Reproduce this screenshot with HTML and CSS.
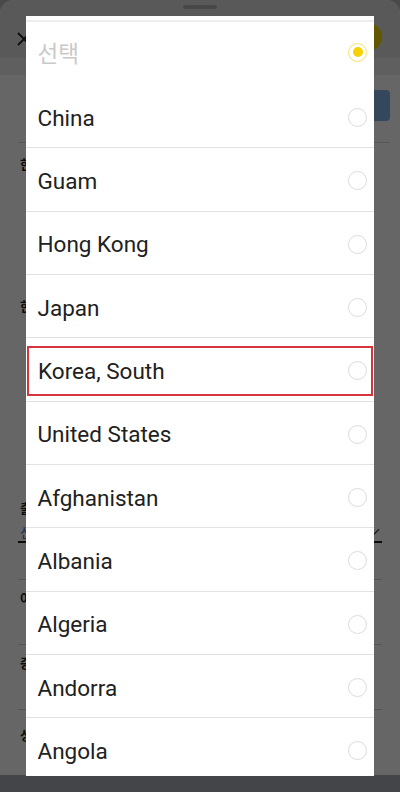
FILE: index.html
```html
<!DOCTYPE html>
<html lang="ko">
<head>
  <meta charset="UTF-8" />
  <meta name="viewport" content="width=device-width, initial-scale=1.0" />
  <title>국가 선택</title>
  <link rel="stylesheet" href="styles.css">
</head>
<body>
  <div class="sheet">
    <div class="handle"></div>
    <header class="topbar">
      <svg class="close" width="14" height="14" viewBox="0 0 14 14">
        <path d="M1 1 L13 13 M13 1 L1 13" stroke="#222" stroke-width="1.8" fill="none" />
      </svg>
      <span class="avatar"><span class="avatar-mark"></span></span>
    </header>
    <div class="tabs"></div>
    <main class="form">
      <div class="search-row">
        <button class="search-btn"></button>
      </div>
      <div class="field field-name">
        <span class="label">한글 성명</span>
      </div>
      <div class="field field-addr">
        <span class="label">한글 주소</span>
      </div>
      <div class="field field-country">
        <span class="label">출생국가</span>
        <div class="select-input">
          <span class="select-value">선택</span>
          <span class="chevron"></span>
        </div>
      </div>
      <div class="field field-short">
        <span class="label">여권번호</span>
      </div>
      <div class="field field-short">
        <span class="label">증명서 종류</span>
      </div>
      <div class="field field-last">
        <span class="label">성별</span>
      </div>
    </main>
    <div class="bottombar"></div>
  </div>

  <div class="scrim"></div>

  <div class="dialog">
    <ul class="options">
      <li class="option option-placeholder">
        <span class="option-inner">
          <span class="option-text">선택</span>
          <span class="radio checked"></span>
        </span>
      </li>
      <li class="option"><span class="option-inner"><span class="option-text">China</span><span class="radio"></span></span></li>
      <li class="option"><span class="option-inner"><span class="option-text">Guam</span><span class="radio"></span></span></li>
      <li class="option"><span class="option-inner"><span class="option-text">Hong Kong</span><span class="radio"></span></span></li>
      <li class="option"><span class="option-inner"><span class="option-text">Japan</span><span class="radio"></span></span></li>
      <li class="option"><span class="option-inner focused"><span class="option-text">Korea, South</span><span class="radio"></span></span></li>
      <li class="option"><span class="option-inner"><span class="option-text">United States</span><span class="radio"></span></span></li>
      <li class="option"><span class="option-inner"><span class="option-text">Afghanistan</span><span class="radio"></span></span></li>
      <li class="option"><span class="option-inner"><span class="option-text">Albania</span><span class="radio"></span></span></li>
      <li class="option"><span class="option-inner"><span class="option-text">Algeria</span><span class="radio"></span></span></li>
      <li class="option"><span class="option-inner"><span class="option-text">Andorra</span><span class="radio"></span></span></li>
      <li class="option"><span class="option-inner"><span class="option-text">Angola</span><span class="radio"></span></span></li>
    </ul>
  </div>
</body>
</html>
```

FILE: styles.css
```css
* {
  margin: 0;
  padding: 0;
  box-sizing: border-box;
}
body {
  width: 400px;
  height: 792px;
  overflow: hidden;
  background-color: #b8b8b8;
  font-family: Roboto, "Noto Sans CJK KR", sans-serif;
}

/* page behind the dialog */
.sheet {
  position: relative;
  height: 792px;
  background-color: #fff;
  border-radius: 14px 14px 0 0;
  overflow: hidden;
  display: flex;
  flex-direction: column;
}
.handle {
  position: absolute;
  top: 5px;
  left: 183px;
  width: 34px;
  height: 4px;
  border-radius: 2px;
  background-color: #b4b4b4;
}
.topbar {
  height: 58px;
  background-color: #dedede;
  display: flex;
  align-items: center;
  justify-content: space-between;
  padding: 0 18px 0 17px;
}
.close {
  margin-top: 20px;
}
.avatar {
  width: 28px;
  height: 28px;
  margin-top: 15px;
  border-radius: 50%;
  background-color: #f5d800;
  display: flex;
  align-items: center;
  padding-left: 3px;
}
.avatar-mark {
  width: 4px;
  height: 8px;
  background-color: #222;
  border-radius: 2px;
}
.tabs {
  height: 17px;
  background-color: #eeeeee;
}
.form {
  flex: 1;
  padding: 0 18px;
  display: flex;
  flex-direction: column;
}
.search-row {
  margin-top: 15px;
  height: 53px;
  border-bottom: 1px solid #d6d6d6;
  display: flex;
  justify-content: flex-end;
  align-items: flex-start;
  margin-right: -8px;
}
.search-btn {
  width: 60px;
  height: 31px;
  border: none;
  border-radius: 4px;
  background-color: #82b2e6;
}
.field {
  display: flex;
  flex-direction: column;
  padding: 15px 2px 0;
}
.label {
  font-size: 13px;
  line-height: 14px;
  font-weight: 700;
  color: #222;
}
.field-name {
  height: 142px;
}
.field-addr {
  height: 202px;
}
.field-country {
  height: 93px;
  border-bottom: 1px solid #d6d6d6;
}
.select-input {
  margin: 5px -2px 0;
  height: 22px;
  border-bottom: 2px solid #222;
  display: flex;
  align-items: center;
  justify-content: space-between;
  padding: 0 4px 0 2px;
}
.select-value {
  font-size: 13px;
  color: #3a6fd8;
}
.chevron {
  width: 7px;
  height: 7px;
  border-right: 1.5px solid #222;
  border-bottom: 1.5px solid #222;
  transform: rotate(45deg);
  margin-top: -4px;
}
.field-short {
  height: 65px;
  padding-top: 12px;
  border-bottom: 1px solid #d6d6d6;
}
.field-last {
  padding-top: 19px;
}
.bottombar {
  height: 17px;
  background-color: #a8adb7;
}

/* overlay */
.scrim {
  position: fixed;
  inset: 0;
  background-color: rgba(0, 0, 0, 0.6);
}
.dialog {
  position: fixed;
  top: 16px;
  left: 26px;
  width: 348px;
  height: 760px;
  background-color: #fff;
  padding-top: 4px;
  overflow: hidden;
}
.options {
  list-style: none;
  border-top: 2px solid #eeeeee;
}
.option {
  height: 63.33px;
  border-bottom: 1px solid #e3e3e3;
  padding-top: 3px;
  display: flex;
}
.option-placeholder {
  border-bottom: none;
  padding: 0 0 3px;
  height: 63px;
}
.option-inner {
  flex: 1;
  display: flex;
  align-items: center;
  justify-content: space-between;
  margin: 5px 1px 5px;
  padding: 0 5px 0 9.5px;
  border: 1.5px solid transparent;
}
.option-inner.focused {
  border: 2px solid #d6353b;
  padding: 0 4.5px 0 9px;
}
.option-text {
  font-size: 22.5px;
  color: #212121;
}
.option-placeholder .option-text {
  color: #c9c9c9;
}
.radio {
  width: 19px;
  height: 19px;
  border-radius: 50%;
  border: 1.5px solid #dcdcdc;
}
.radio.checked {
  border-color: #f6e26a;
  display: flex;
  align-items: center;
  justify-content: center;
}
.radio.checked::after {
  content: "";
  width: 10px;
  height: 10px;
  border-radius: 50%;
  background-color: #f5d200;
}
```
